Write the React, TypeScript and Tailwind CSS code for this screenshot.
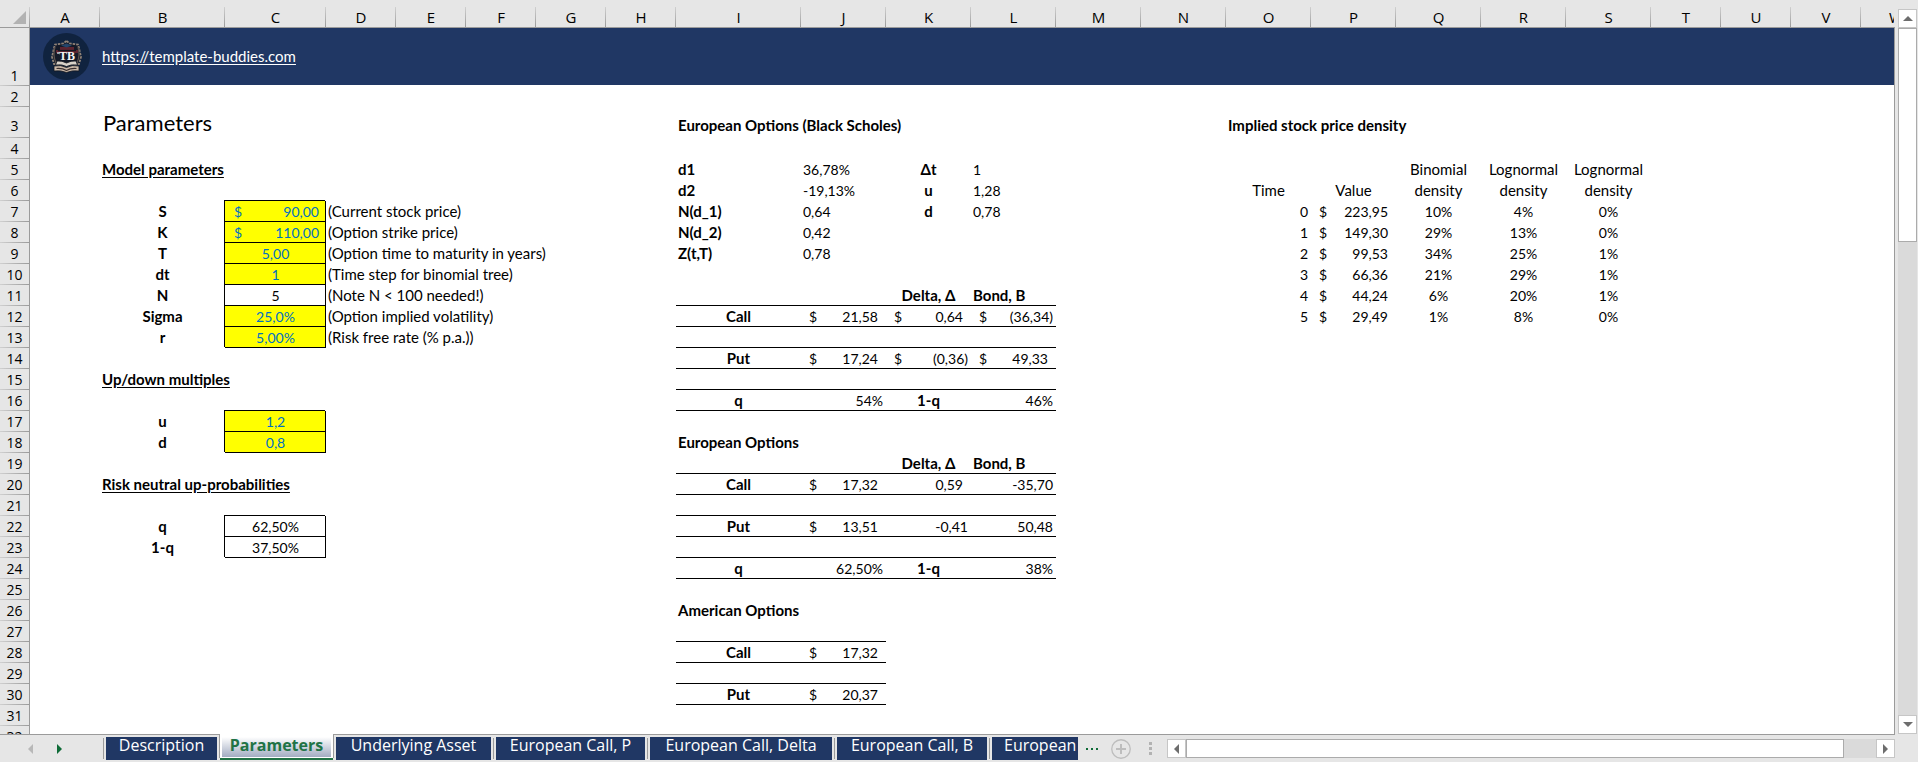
import React from "react";
import { clsx } from "clsx";

type Cell = {
  text?: string;
  className?: string;
  dollar?: boolean;
  boxed?: boolean;
};

const columns: { name: string; width: string }[] = [
  { name: "A", width: "w-[70px]" },
  { name: "B", width: "w-[125px]" },
  { name: "C", width: "w-[101px]" },
  { name: "D", width: "w-[70px]" },
  { name: "E", width: "w-[70px]" },
  { name: "F", width: "w-[70px]" },
  { name: "G", width: "w-[70px]" },
  { name: "H", width: "w-[70px]" },
  { name: "I", width: "w-[125px]" },
  { name: "J", width: "w-[85px]" },
  { name: "K", width: "w-[85px]" },
  { name: "L", width: "w-[85px]" },
  { name: "M", width: "w-[85px]" },
  { name: "N", width: "w-[85px]" },
  { name: "O", width: "w-[85px]" },
  { name: "P", width: "w-[85px]" },
  { name: "Q", width: "w-[85px]" },
  { name: "R", width: "w-[85px]" },
  { name: "S", width: "w-[85px]" },
  { name: "T", width: "w-[70px]" },
  { name: "U", width: "w-[70px]" },
  { name: "V", width: "w-[70px]" },
  { name: "W", width: "w-[70px]" },
];

const left = "pl-0.5 text-left";
const leftBold = "pl-0.5 text-left text-[15px] font-bold";
const center = "text-center";
const label = "text-center text-[15px]";
const centerBold = "text-center text-[15px] font-bold";
const right = "pr-[3px] text-right";
const money = "pl-2 pr-2";
const moneyNegative = "pl-2 pr-[3px]";
const section = "pl-0.5 text-left text-[15px] font-bold underline underline-offset-2";
const input = "bg-[#ffff00] text-[#0070c0]";

const cells: Record<string, Cell> = {
  B3: { text: "Parameters", className: "pl-[3px] text-[22px] leading-[31px]" },
  B5: { text: "Model parameters", className: section },
  B15: { text: "Up/down multiples", className: section },
  B20: { text: "Risk neutral up-probabilities", className: section },

  I3: { text: "European Options (Black Scholes)", className: leftBold },
  I5: { text: "d1", className: leftBold },
  I6: { text: "d2", className: leftBold },
  I7: { text: "N(d_1)", className: leftBold },
  I8: { text: "N(d_2)", className: leftBold },
  I9: { text: "Z(t,T)", className: leftBold },
  J5: { text: "36,78%", className: left },
  J6: { text: "-19,13%", className: left },
  J7: { text: "0,64", className: left },
  J8: { text: "0,42", className: left },
  J9: { text: "0,78", className: left },
  K5: { text: "Δt", className: centerBold },
  K6: { text: "u", className: centerBold },
  K7: { text: "d", className: centerBold },
  L5: { text: "1", className: left },
  L6: { text: "1,28", className: left },
  L7: { text: "0,78", className: left },

  K11: { text: "Delta, Δ", className: centerBold },
  L11: { text: "Bond, B", className: leftBold },
  I12: { text: "Call", className: centerBold },
  J12: { text: "21,58", dollar: true, className: money },
  K12: { text: "0,64", dollar: true, className: money },
  L12: { text: "(36,34)", dollar: true, className: moneyNegative },
  I14: { text: "Put", className: centerBold },
  J14: { text: "17,24", dollar: true, className: money },
  K14: { text: "(0,36)", dollar: true, className: moneyNegative },
  L14: { text: "49,33", dollar: true, className: money },
  I16: { text: "q", className: centerBold },
  J16: { text: "54%", className: right },
  K16: { text: "1-q", className: centerBold },
  L16: { text: "46%", className: right },

  I18: { text: "European Options", className: leftBold },
  K19: { text: "Delta, Δ", className: centerBold },
  L19: { text: "Bond, B", className: leftBold },
  I20: { text: "Call", className: centerBold },
  J20: { text: "17,32", dollar: true, className: money },
  K20: { text: "0,59", className: "pr-2 text-right" },
  L20: { text: "-35,70", className: right },
  I22: { text: "Put", className: centerBold },
  J22: { text: "13,51", dollar: true, className: money },
  K22: { text: "-0,41", className: right },
  L22: { text: "50,48", className: right },
  I24: { text: "q", className: centerBold },
  J24: { text: "62,50%", className: right },
  K24: { text: "1-q", className: centerBold },
  L24: { text: "38%", className: right },

  I26: { text: "American Options", className: leftBold },
  I28: { text: "Call", className: centerBold },
  J28: { text: "17,32", dollar: true, className: money },
  I30: { text: "Put", className: centerBold },
  J30: { text: "20,37", dollar: true, className: money },

  O3: { text: "Implied stock price density", className: leftBold },
  O6: { text: "Time", className: label },
  P6: { text: "Value", className: label },
  Q5: { text: "Binomial", className: label },
  Q6: { text: "density", className: label },
  R5: { text: "Lognormal", className: label },
  R6: { text: "density", className: label },
  S5: { text: "Lognormal", className: label },
  S6: { text: "density", className: label },
};

const parameters: [number, string, string, string, boolean, boolean][] = [
  [7, "S", "90,00", "(Current stock price)", true, true],
  [8, "K", "110,00", "(Option strike price)", true, true],
  [9, "T", "5,00", "(Option time to maturity in years)", true, false],
  [10, "dt", "1", "(Time step for binomial tree)", true, false],
  [11, "N", "5", "(Note N < 100 needed!)", false, false],
  [12, "Sigma", "25,0%", "(Option implied volatility)", true, false],
  [13, "r", "5,00%", "(Risk free rate (% p.a.))", true, false],
  [17, "u", "1,2", "", true, false],
  [18, "d", "0,8", "", true, false],
  [22, "q", "62,50%", "", false, false],
  [23, "1-q", "37,50%", "", false, false],
];

parameters.forEach(([row, name, value, note, editable, dollar]) => {
  cells[`B${row}`] = { text: name, className: centerBold };
  cells[`C${row}`] = {
    text: value,
    dollar,
    boxed: true,
    className: clsx(editable && input, dollar ? "pl-[9px] pr-[7px]" : center),
  };
  if (note) cells[`D${row}`] = { text: note, className: "pl-0.5 text-left text-[15px]" };
});

const densities: [string, string, string, string][] = [
  ["223,95", "10%", "4%", "0%"],
  ["149,30", "29%", "13%", "0%"],
  ["99,53", "34%", "25%", "1%"],
  ["66,36", "21%", "29%", "1%"],
  ["44,24", "6%", "20%", "1%"],
  ["29,49", "1%", "8%", "0%"],
];

densities.forEach(([value, binomial, lognormalA, lognormalB], time) => {
  const row = 7 + time;
  cells[`O${row}`] = { text: String(time), className: right };
  cells[`P${row}`] = { text: value, dollar: true, className: money };
  cells[`Q${row}`] = { text: binomial, className: center };
  cells[`R${row}`] = { text: lognormalA, className: center };
  cells[`S${row}`] = { text: lognormalB, className: center };
});

const ruledRows = [12, 14, 16, 20, 22, 24];
const shortRuledRows = [28, 30];

function isRuled(column: string, row: number) {
  if (ruledRows.includes(row)) return "IJKL".includes(column);
  if (shortRuledRows.includes(row)) return "IJ".includes(column);
  return false;
}

function Logo() {
  return (
    <svg viewBox="0 0 47 47" className="ml-[13px] block size-[47px]" aria-label="Template Buddies">
      <circle cx="23.5" cy="23.5" r="23.5" fill="#10233f" />
      <path d="M23.500 8L27 10.500L35 11.500L36 15L38 24L36 31L11 31L9 24L11 15L12 11.500L20 10.500Z" fill="#141a28" stroke="#8f8277" strokeWidth="1.800" strokeDasharray="2.500 1" />
      <path d="M12 14Q9.500 22 13 30M35 14Q37.500 22 34 30" fill="none" stroke="#5d534e" strokeWidth="1.200" />
      <path d="M17 14h14v3h4v3H13v-3h4z" fill="#5c2430" />
      <path d="M18 12.500l5.500-2 5.500 2-5.500 2z" fill="#24456b" />
      <path d="M15 17.500h18" stroke="#12161f" strokeWidth="1.200" />
      <path d="M14 28q5-.5 9.500 2 4.500-2.500 9.500-2l1.500 4q-6.500-1-11 1.500-4.500-2.500-11-1.500z" fill="#d9d2c8" stroke="#11151e" strokeWidth=".8" />
      <path d="M11 33q7-1.500 12.500 1.500Q29 31.500 36 33v5q-7-1-12.500 1.500Q18 37 11 38z" fill="#cbb9a8" stroke="#11151e" strokeWidth=".8" />
      <path d="M13.500 35.500q6-.5 10 2 4-2.500 10-2" fill="none" stroke="#3a3030" strokeWidth="1.200" />
      <path d="M15 19v2" stroke="#f0f0f0" strokeWidth="1.200" />
      <text x="20" y="27" textAnchor="middle" fontFamily="Liberation Serif, serif" fontWeight="700" fontSize="12" fill="#f4f4f4">T</text>
      <text x="28" y="27" textAnchor="middle" fontFamily="Liberation Serif, serif" fontWeight="700" fontSize="12" fill="#f4f4f4">B</text>
    </svg>
  );
}

function SheetCell({ column, row }: { column: string; row: number }) {
  const cell = cells[`${column}${row}`];
  return (
    <td
      className={clsx(
        "whitespace-nowrap p-0",
        row === 3 ? "align-baseline" : "align-bottom",
        cell?.boxed && "shadow-[inset_-1px_-1px_0_#000,-1px_-1px_0_#000]",
        isRuled(column, row) && "shadow-[inset_0_-1px_0_#000,0_-1px_0_#000]",
        cell?.className,
      )}
    >
      {cell?.dollar ? (
        <div className="flex justify-between">
          <span>$</span>
          <span>{cell.text}</span>
        </div>
      ) : (
        cell?.text
      )}
    </td>
  );
}

const rowHeaderStyle =
  "relative border-r border-[#9b9b9b] bg-[#e6e6e6] p-0 text-center font-['Open_Sans',sans-serif] text-sm leading-[21px] font-normal after:absolute after:inset-x-0 after:bottom-0 after:h-px after:bg-linear-to-r after:from-[#d0d0d0] after:to-[#9b9b9b]";

function Sheet() {
  const rows = Array.from({ length: 31 }, (_, i) => i + 2);
  return (
    <table className="w-full table-fixed border-separate border-spacing-0 font-[Lato,sans-serif] text-sm leading-[21px] text-black">
      <colgroup>
        <col className="w-[30px]" />
        {columns.map((c) => (
          <col key={c.name} className={c.width} />
        ))}
        <col />
      </colgroup>
      <thead>
        <tr className="h-7 bg-[#e6e6e6]">
          <td className="border-b border-[#9b9b9b] p-0 align-bottom">
            <svg viewBox="0 0 13 13" className="mb-[3px] ml-[13px] block size-[13px]" aria-hidden="true">
              <path d="M13 0V13H0Z" fill="#b2b2b2" />
            </svg>
          </td>
          {columns.map((c) => (
            <th
              key={c.name}
              scope="col"
              className="relative border-b border-[#9b9b9b] p-0 align-bottom font-['Open_Sans',sans-serif] text-[15px] leading-5 font-normal before:absolute before:bottom-0 before:-left-px before:h-5 before:w-px before:bg-linear-to-b before:from-[#d0d0d0] before:to-[#9b9b9b]"
            >
              {c.name}
            </th>
          ))}
          <td className="border-b border-[#9b9b9b] p-0" />
        </tr>
      </thead>
      <tbody>
        <tr className="h-[58px]">
          <th scope="row" className={clsx(rowHeaderStyle, "align-bottom")}>
            1
          </th>
          <td className="border-b border-white bg-[#203764] p-0">
            <Logo />
          </td>
          <td
            colSpan={columns.length}
            className="border-b border-white bg-[#203764] p-0 pl-0.5 text-[15px] text-white"
          >
            <a href="https://template-buddies.com" className="underline underline-offset-2">
              https://template-buddies.com
            </a>
          </td>
        </tr>
        {rows.map((row) => (
          <tr key={row} className={row === 3 ? "h-[31px]" : "h-[21px]"}>
            <th scope="row" className={clsx(rowHeaderStyle, row === 3 ? "align-baseline" : "align-bottom")}>
              {row}
            </th>
            {columns.map((c) => (
              <SheetCell key={c.name} column={c.name} row={row} />
            ))}
            <td className="p-0" />
          </tr>
        ))}
      </tbody>
    </table>
  );
}

function Arrow({ direction, className }: { direction: "up" | "down" | "left" | "right"; className?: string }) {
  const paths = {
    up: "M0 5L5 0L10 5Z",
    down: "M0 0L5 5L10 0Z",
    left: "M5 0V10L0 5Z",
    right: "M0 0V10L5 5Z",
  };
  const vertical = direction === "up" || direction === "down";
  return (
    <svg
      viewBox={vertical ? "0 0 10 5" : "0 0 5 10"}
      className={clsx(vertical ? "h-[5px] w-[10px]" : "h-[10px] w-[5px]", className)}
      aria-hidden="true"
    >
      <path d={paths[direction]} fill="currentColor" />
    </svg>
  );
}

const scrollButton = "flex shrink-0 items-center justify-center border border-[#c6c6c6] bg-white text-[#6d6d6d]";

function VerticalScrollbar() {
  return (
    <div className="ml-[3px] mr-px mt-[9px] flex w-[19px] flex-col bg-[#dadada]">
      <button aria-label="Scroll up" className={clsx(scrollButton, "h-[19px]")}>
        <Arrow direction="up" />
      </button>
      <div className="h-[214px] shrink-0 border border-[#ababab] bg-white" />
      <div className="flex-1" />
      <button aria-label="Scroll down" className={clsx(scrollButton, "h-[19px]")}>
        <Arrow direction="down" />
      </button>
    </div>
  );
}

const tabs: { name: string; width: string; active?: boolean; clipped?: boolean }[] = [
  { name: "Description", width: "w-[111px]" },
  { name: "Parameters", width: "w-[113px]", active: true },
  { name: "Underlying Asset", width: "w-[155px]" },
  { name: "European Call, P", width: "w-[149px]" },
  { name: "European Call, Delta", width: "w-[182px]" },
  { name: "European Call, B", width: "w-[150px]" },
  { name: "European", width: "w-[86px]", clipped: true },
];

function Divider({ side }: { side: "before-active" | "after-active" | "plain" }) {
  return (
    <div
      className={clsx(
        "flex border-t border-[#9b9b9b]",
        side === "plain" && "w-[5px] justify-center py-[3px]",
        side === "before-active" && "w-[3px] justify-end pb-1",
        side === "after-active" && "w-[3px] justify-start pb-1",
      )}
    >
      <span className="w-px bg-[#9b9b9b]" />
    </div>
  );
}

function Tabs() {
  return (
    <div role="tablist" className="flex shrink-0 font-['Open_Sans',sans-serif] text-base leading-4">
      {tabs.map((tab, i) => (
        <React.Fragment key={tab.name}>
          <Divider side={tab.active ? "before-active" : tabs[i - 1]?.active ? "after-active" : "plain"} />
          {tab.active ? (
            <button
              role="tab"
              aria-selected="true"
              className={clsx(tab.width, "mb-0.5 flex flex-col border-b-2 border-[#217346] bg-white px-0.5 pt-[3px] pb-px")}
            >
              <span className="flex w-full flex-1 justify-center bg-linear-to-b from-white to-[#a3adc2] font-bold text-[#217346]">
                {tab.name}
              </span>
            </button>
          ) : (
            <div className="border-t border-[#9b9b9b] pt-0.5 pb-0.5">
              <button
                role="tab"
                aria-selected="false"
                className={clsx(
                  tab.width,
                  "flex h-full items-start bg-[#203764] whitespace-nowrap text-white",
                  tab.clipped ? "justify-start overflow-hidden pl-3" : "justify-center",
                )}
              >
                {tab.name}
              </button>
            </div>
          )}
        </React.Fragment>
      ))}
    </div>
  );
}

function BottomBar() {
  return (
    <div className="flex h-7 shrink-0 bg-[#e6e6e6]">
      <div className="flex w-[101px] shrink-0 items-center border-t border-[#9b9b9b] pl-7">
        <button aria-label="Previous sheet" className="text-[#b8b8b8]">
          <Arrow direction="left" className="block" />
        </button>
        <button aria-label="Next sheet" className="ml-6 text-[#0e6b37]">
          <Arrow direction="right" className="block" />
        </button>
      </div>
      <Tabs />
      <div className="flex min-w-0 flex-1 items-center border-t border-[#9b9b9b]">
        <button aria-label="More sheets" className="ml-2 flex gap-[3px]">
          <span className="size-0.5 bg-[#0e6b37]" />
          <span className="size-0.5 bg-[#0e6b37]" />
          <span className="size-0.5 bg-[#0e6b37]" />
        </button>
        <button aria-label="New sheet" className="ml-[13px]">
          <svg viewBox="0 0 20 20" className="block size-5" fill="none" stroke="#bdbdbd" aria-hidden="true">
            <circle cx="10" cy="10" r="9.250" strokeWidth="1.300" />
            <path d="M10 5V15M5 10H15" strokeWidth="2" />
          </svg>
        </button>
        <div className="ml-[18px] flex flex-col gap-0.5">
          <span className="size-[3px] bg-[#b2b2b2]" />
          <span className="size-[3px] bg-[#b2b2b2]" />
          <span className="size-[3px] bg-[#b2b2b2]" />
        </div>
        <div className="ml-[15px] flex h-[19px] flex-1 bg-[#dadada]">
          <button aria-label="Scroll left" className={clsx(scrollButton, "w-[19px]")}>
            <Arrow direction="left" />
          </button>
          <div className="mr-8 flex-1 border border-[#ababab] bg-white" />
          <button aria-label="Scroll right" className={clsx(scrollButton, "w-[19px]")}>
            <Arrow direction="right" />
          </button>
        </div>
      </div>
      <div className="w-[23px] shrink-0" />
    </div>
  );
}

export default function App() {
  return (
    <div className="flex h-screen flex-col overflow-hidden bg-[#e6e6e6]">
      <div className="flex min-h-0 flex-1">
        <main className="min-w-0 flex-1 overflow-hidden bg-white">
          <Sheet />
        </main>
        <div className="mt-[27px] w-px bg-[#9b9b9b]" />
        <VerticalScrollbar />
      </div>
      <BottomBar />
    </div>
  );
}
